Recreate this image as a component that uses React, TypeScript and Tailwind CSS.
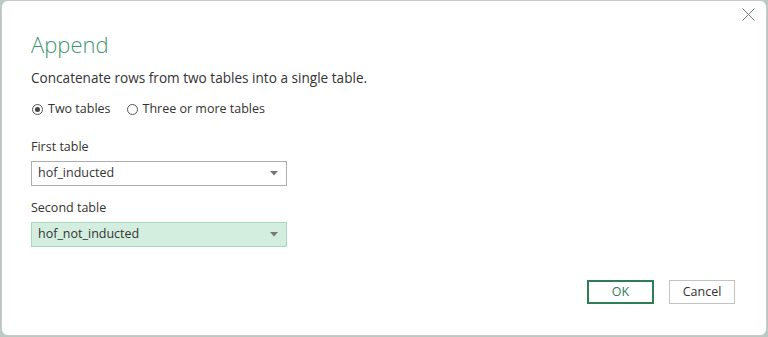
import { useState } from "react";

const font = { fontFamily: '"Open Sans", "Noto Sans", sans-serif' };

function Radio({ checked, label, onSelect }: { checked: boolean; label: string; onSelect: () => void }) {
  return (
    <label className="flex items-center gap-[5px] cursor-pointer" onClick={onSelect}>
      <span className="w-[11px] h-[11px] rounded-full border border-[#555] flex items-center justify-center bg-white">
        {checked && <span className="w-[5px] h-[5px] rounded-full bg-[#444]" />}
      </span>
      <span>{label}</span>
    </label>
  );
}

function Select({ value, active }: { value: string; active?: boolean }) {
  return (
    <div
      className={`w-[256px] h-[25px] flex items-center justify-between pl-[6px] pr-[8px] border ${
        active ? "bg-[#d3eedf] border-[#a6dbbd]" : "bg-white border-[#adadad]"
      }`}
    >
      <span className="text-[12.5px] text-[#333]">{value}</span>
      <svg width="8" height="5" viewBox="0 0 8 5">
        <path d="M0 0 H8 L4 4.5 Z" fill="#777" />
      </svg>
    </div>
  );
}

export default function App() {
  const [mode, setMode] = useState<"two" | "three">("two");

  return (
    <div className="w-[768px] h-[337px] bg-[#b9cac1]" style={font}>
      <div className="w-[766px] h-[336px] ml-[1px] bg-white border border-[#c8c8c8] rounded-[7px] relative text-[#333]">
        <button className="absolute right-[10px] top-[5px] w-[16px] h-[16px] flex items-center justify-center">
          <svg width="13" height="13" viewBox="0 0 13 13">
            <path d="M0.5 0.5 L12.5 12.5 M12.5 0.5 L0.5 12.5" stroke="#777" strokeWidth="1" />
          </svg>
        </button>

        <div className="pl-[29px] pt-[28px]">
          <h2 className="text-[22px] font-light text-[#3f9570] leading-[30px]">Append</h2>
          <p className="mt-[9px] text-[13.6px] leading-[20px]">Concatenate rows from two tables into a single table.</p>

          <div className="mt-[12px] flex items-center gap-[16px] text-[12.5px] leading-[18px] pl-[1px]">
            <Radio checked={mode === "two"} label="Two tables" onSelect={() => setMode("two")} />
            <Radio checked={mode === "three"} label="Three or more tables" onSelect={() => setMode("three")} />
          </div>

          <div className="mt-[20px] text-[12.5px] leading-[18px]">First table</div>
          <div className="mt-[5px]">
            <Select value="hof_inducted" />
          </div>

          <div className="mt-[13px] text-[12.5px] leading-[18px]">Second table</div>
          <div className="mt-[5px]">
            <Select value="hof_not_inducted" active />
          </div>
        </div>

        <div className="absolute right-[31px] bottom-[31px] flex gap-[15px] text-[12.5px]">
          <button className="w-[67px] h-[24px] border-2 border-[#2e7d57] text-[#2e7d57] bg-white">OK</button>
          <button className="w-[66px] h-[24px] border border-[#c3c3c3] bg-white text-[#333]">Cancel</button>
        </div>
      </div>
    </div>
  );
}
